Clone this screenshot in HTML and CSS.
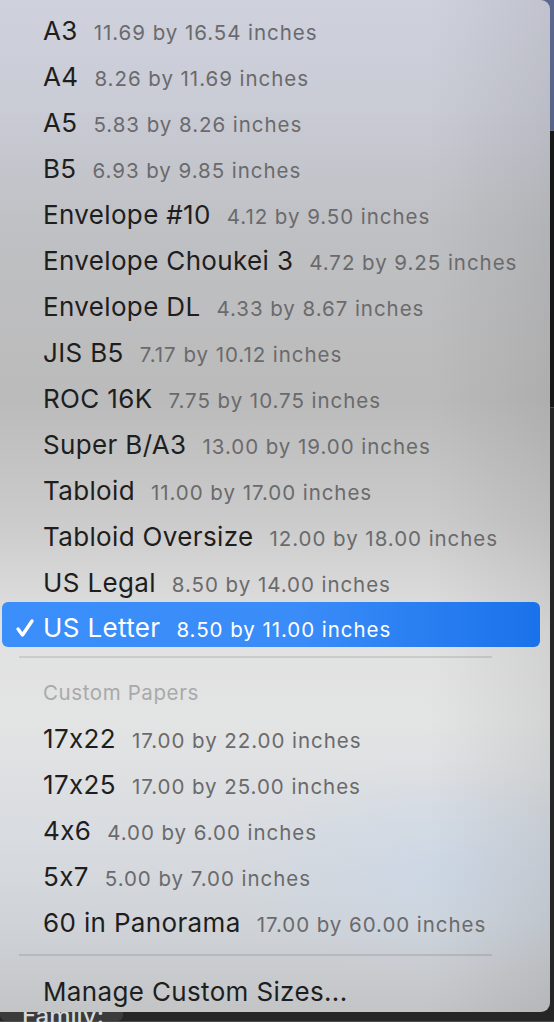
FILE: index.html
```html
<!DOCTYPE html>
<html lang="en">
<head>
    <meta charset="UTF-8">
    <meta name="viewport" content="width=device-width, initial-scale=1.0">
    <title>Paper Size</title>
    <link rel="stylesheet" href="styles.css">
</head>
<body>
    <div class="window">
        <div class="toolbar"></div>
        <div class="pane"></div>
        <div class="pane lower">
            <button class="family">Family:</button>
        </div>
    </div>

    <div class="menu">
        <ul class="items">
            <li class="item"><span class="name">A3</span><span class="size">11.69 by 16.54 inches</span></li>
            <li class="item"><span class="name">A4</span><span class="size">8.26 by 11.69 inches</span></li>
            <li class="item"><span class="name">A5</span><span class="size">5.83 by 8.26 inches</span></li>
            <li class="item"><span class="name">B5</span><span class="size">6.93 by 9.85 inches</span></li>
            <li class="item"><span class="name">Envelope #10</span><span class="size">4.12 by 9.50 inches</span></li>
            <li class="item"><span class="name">Envelope Choukei 3</span><span class="size">4.72 by 9.25 inches</span></li>
            <li class="item"><span class="name">Envelope DL</span><span class="size">4.33 by 8.67 inches</span></li>
            <li class="item"><span class="name">JIS B5</span><span class="size">7.17 by 10.12 inches</span></li>
            <li class="item"><span class="name">ROC 16K</span><span class="size">7.75 by 10.75 inches</span></li>
            <li class="item"><span class="name">Super B/A3</span><span class="size">13.00 by 19.00 inches</span></li>
            <li class="item"><span class="name">Tabloid</span><span class="size">11.00 by 17.00 inches</span></li>
            <li class="item"><span class="name">Tabloid Oversize</span><span class="size">12.00 by 18.00 inches</span></li>
            <li class="item"><span class="name">US Legal</span><span class="size">8.50 by 14.00 inches</span></li>
            <li class="item selected">
                <svg class="check" viewBox="0 0 20 20" width="20" height="20">
                    <path d="M3 11 L7.5 17 L17 3" fill="none" stroke="#fff" stroke-width="3.4" stroke-linecap="round" stroke-linejoin="round"/>
                </svg>
                <span class="name">US Letter</span><span class="size">8.50 by 11.00 inches</span>
            </li>
        </ul>
        <hr class="sep">
        <div class="heading">Custom Papers</div>
        <ul class="items">
            <li class="item"><span class="name">17x22</span><span class="size">17.00 by 22.00 inches</span></li>
            <li class="item"><span class="name">17x25</span><span class="size">17.00 by 25.00 inches</span></li>
            <li class="item"><span class="name">4x6</span><span class="size">4.00 by 6.00 inches</span></li>
            <li class="item"><span class="name">5x7</span><span class="size">5.00 by 7.00 inches</span></li>
            <li class="item"><span class="name">60 in Panorama</span><span class="size">17.00 by 60.00 inches</span></li>
        </ul>
        <hr class="sep">
        <div class="item manage"><span class="name">Manage Custom Sizes...</span></div>
    </div>
</body>
</html>
```

FILE: styles.css
```css
:root{
  --text:#1e1e1e;
  --muted:#6a6a6c;
  --faint:#a9a9ab;
  --blue:#3b8ffb;
  --blue-dark:#1a72ea;
}

*{
  box-sizing: border-box;
  margin: 0;
  padding: 0;
}

body{
  width: 554px;
  height: 1022px;
  overflow: hidden;
  background: #1f1f1f;
  font-family: Inter, "Noto Sans", sans-serif;
  position: relative;
}

/* window behind the menu */
.window{
  display: flex;
  flex-direction: column;
  height: 100%;
}
.toolbar{
  height: 131px;
  background: linear-gradient(#5b6890, #55628a);
  border-bottom: 1px solid #6a6f7c;
}
.pane{
  height: 277px;
  background: #171717;
  border-bottom: 1px solid #4c4c4c;
}
.pane.lower{
  flex: 1;
  background: #262626;
  display: flex;
  align-items: flex-end;
}
.family{
  appearance: none;
  border: none;
  width: 123px;
  height: 10px;
  padding: 0 0 0 22px;
  border-radius: 0 0 6px 6px;
  background: #3b3b3b;
  color: #d8d8d8;
  font: 500 24px Inter, sans-serif;
  line-height: 4px;
  text-align: left;
  overflow: visible;
}

/* popup menu */
.menu{
  position: absolute;
  top: 0;
  left: -10px;
  width: 560px;
  height: 1012px;
  padding-top: 7px;
  border-radius: 9px;
  overflow: hidden;
  background:
    linear-gradient(to right, rgba(0,0,0,0) 78%, rgba(0,0,0,0.07) 100%),
    radial-gradient(ellipse 200px 110px at 450px 870px, rgba(196,214,236,0.5), rgba(196,214,236,0)),
    linear-gradient(#cfd1dd 0px, #c9cbd5 110px, #bfc0c3 230px, #bbbbbb 400px, #cbcbcb 520px, #e1e1e1 630px, #e3e4e4 720px, #d9dce0 830px, #d0d4d9 920px, #c3c4c6 1012px);
}

.items{
  list-style: none;
}
.item{
  height: 46px;
  display: flex;
  align-items: center;
  padding-left: 53px;
  white-space: nowrap;
}
.item .name{
  font-size: 26px;
  color: var(--text);
  letter-spacing: 0.35px;
}
.item .size{
  font-size: 20.5px;
  color: var(--muted);
  margin-left: 16px;
  padding-top: 4px;
  letter-spacing: 0.95px;
}

.item.selected{
  position: relative;
  margin: -3px 10px 0 12px;
  height: 45px;
  padding: 5px 0 0 41px;
  border-radius: 6px;
  background: linear-gradient(to right, var(--blue) 0%, #3a8cf8 55%, var(--blue-dark) 100%);
}
.item.selected .name,
.item.selected .size{
  color: #fff;
}
.check{
  position: absolute;
  left: 13px;
  top: 16px;
}

.sep{
  border: none;
  height: 2px;
  background: rgba(0,0,0,0.1);
  margin: 14px 0 0 29px;
  width: 473px;
}

.heading{
  height: 57px;
  display: flex;
  align-items: center;
  padding: 12px 0 0 53px;
  font-size: 20.5px;
  letter-spacing: 0.6px;
  color: var(--faint);
}
.items + .sep{
  margin-top: 9px;
}
.manage{
  margin-top: 12px;
}
```
